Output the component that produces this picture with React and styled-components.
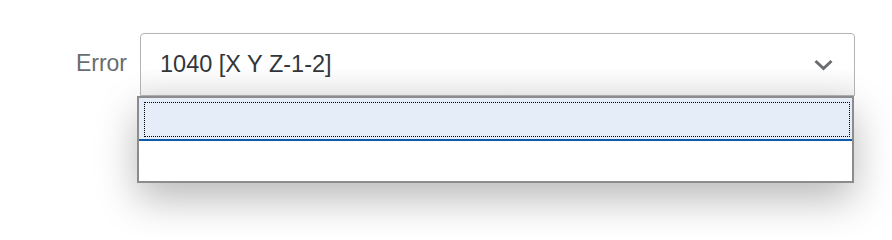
import React, { useState } from "react";
import styled, { createGlobalStyle } from "styled-components";

const GlobalStyle = createGlobalStyle`
  body {
    margin: 0;
    background: #ffffff;
    font-family: "Liberation Sans", Arial, sans-serif;
  }
`;

const Page = styled.div`
  width: 892px;
  height: 236px;
  overflow: hidden;
  padding-top: 33px;
  box-sizing: border-box;
`;

const FieldRow = styled.div`
  display: flex;
  align-items: center;
  gap: 13px;
`;

const Label = styled.label`
  width: 127px;
  text-align: right;
  font-size: 23px;
  color: #6a6d70;
  padding-bottom: 2px;
`;

const SelectWrap = styled.div`
  position: relative;
  width: 715px;
`;

const SelectBox = styled.div`
  height: 63px;
  box-sizing: border-box;
  display: flex;
  align-items: center;
  justify-content: space-between;
  padding: 0 21px 0 19px;
  border: 1px solid #b4b4b4;
  border-radius: 4px 4px 0 0;
  background: linear-gradient(#ffffff 0%, #ffffff 55%, #f2f2f2 100%);
  cursor: pointer;
`;

const Value = styled.span`
  font-size: 23.5px;
  color: #32363a;
  padding-bottom: 1px;
`;

const Chevron = styled.svg`
  width: 19px;
  height: 12px;
  display: block;
`;

const List = styled.ul`
  position: absolute;
  top: 63px;
  left: -3px;
  width: 717px;
  margin: 0;
  padding: 0;
  list-style: none;
  box-sizing: border-box;
  border: 2px solid #8c8c8c;
  background: #ffffff;
  box-shadow: 0 16px 40px rgba(0, 0, 0, 0.28);
`;

const Item = styled.li`
  position: relative;
  height: ${(p) => (p.$selected ? "43px" : "40px")};
  box-sizing: border-box;
  background: ${(p) => (p.$selected ? "#e5eef8" : "#ffffff")};
  border-bottom: ${(p) => (p.$selected ? "2px solid #0a5aa8" : "none")};

  &::after {
    content: "";
    display: ${(p) => (p.$focused ? "block" : "none")};
    position: absolute;
    top: 4px;
    left: 5px;
    right: 2px;
    bottom: 2px;
    border: 1px dotted #000000;
  }
`;

export default function App() {
  const [items] = useState(["", ""]);

  return (
    <Page>
      <GlobalStyle />
      <FieldRow>
        <Label>Error</Label>
        <SelectWrap>
          <SelectBox>
            <Value>1040 [X Y Z-1-2]</Value>
            <Chevron viewBox="0 0 19 12">
              <polyline
                points="1.5,2 9.5,9.5 17.5,2"
                fill="none"
                stroke="#6a6d70"
                strokeWidth="3"
              />
            </Chevron>
          </SelectBox>
          <List>
            {items.map((item, i) => (
              <Item key={i} $selected={i === 0} $focused={i === 0}>
                {item}
              </Item>
            ))}
          </List>
        </SelectWrap>
      </FieldRow>
    </Page>
  );
}
